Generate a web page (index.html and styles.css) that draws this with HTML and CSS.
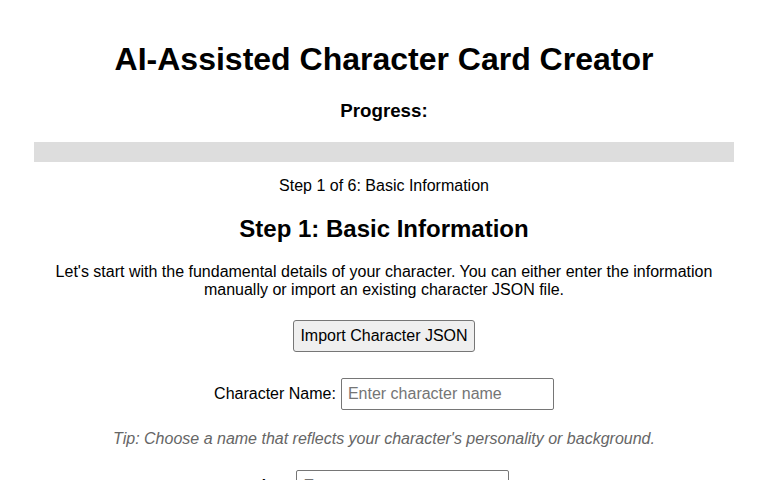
FILE: index.html
```
<!DOCTYPE html>
<html lang="en">
<head>
<meta charset="utf-8">
<title>AI-Assisted Character Card Creator</title>
<link rel="stylesheet" href="styles.css">
</head>
<body>
<div class="container">
  <h1>AI-Assisted Character Card Creator</h1>
  <h3 class="progress-label">Progress:</h3>
  <div class="progress-bar"><div class="progress-fill" style="width: 0%"></div></div>
  <p class="step-count">Step 1 of 6: Basic Information</p>
  <h2>Step 1: Basic Information</h2>
  <p class="intro">Let's start with the fundamental details of your character. You can either enter the information manually or import an existing character JSON file.</p>
  <div class="import"><button class="btn" type="button">Import Character JSON</button></div>
  <div class="field">
    <label for="name">Character Name:</label>
    <input id="name" class="input" type="text" placeholder="Enter character name">
  </div>
  <p class="tip">Tip: Choose a name that reflects your character's personality or background.</p>
  <div class="field">
    <label for="age">Age:</label>
    <input id="age" class="input" type="text" placeholder="Enter age">
  </div>
  <p class="tip">Tip: Consider how age affects your character's experience and outlook.</p>
</div>
</body>
</html>
```

FILE: styles.css
```
html, body {
  margin: 0;
  padding: 0;
  background: #ffffff;
}
body {
  font-family: "Liberation Sans", Arial, sans-serif;
  font-size: 16px;
  color: #000;
}
.container {
  max-width: 700px;
  margin: 0 auto;
  padding: 20px 0;
  text-align: center;
}
h1 {
  font-size: 32px;
  font-weight: bold;
  margin: 21.44px 0;
}
.progress-label {
  font-size: 18.72px;
  font-weight: bold;
  margin: 18.72px 0;
}
.progress-bar {
  height: 20px;
  background: #dddddd;
  margin: 20px 0 15px;
}
.progress-fill {
  height: 100%;
  background: #4caf50;
}
.step-count {
  margin: 0;
}
h2 {
  font-size: 24px;
  font-weight: bold;
  margin: 19.92px 0;
}
.intro {
  margin: 0;
}
.import {
  margin: 21px 0 26px;
}
.btn {
  font-family: "Liberation Sans", Arial, sans-serif;
  font-size: 16px;
  color: #000;
  padding: 6px 6px;
  background: #efefef;
  border: 1px solid #767676;
  border-radius: 3px;
  line-height: 18px;
}
.field {
  display: flex;
  justify-content: center;
  align-items: center;
  gap: 5px;
}
.input {
  box-sizing: border-box;
  width: 213px;
  height: 32px;
  padding: 5px 6px;
  font-family: "Liberation Sans", Arial, sans-serif;
  font-size: 16px;
  border: 1px solid #767676;
  border-radius: 2px;
}
.input::placeholder {
  color: #757575;
}
.tip {
  font-style: italic;
  color: #666666;
  margin: 20.5px 0 22px;
}
```
